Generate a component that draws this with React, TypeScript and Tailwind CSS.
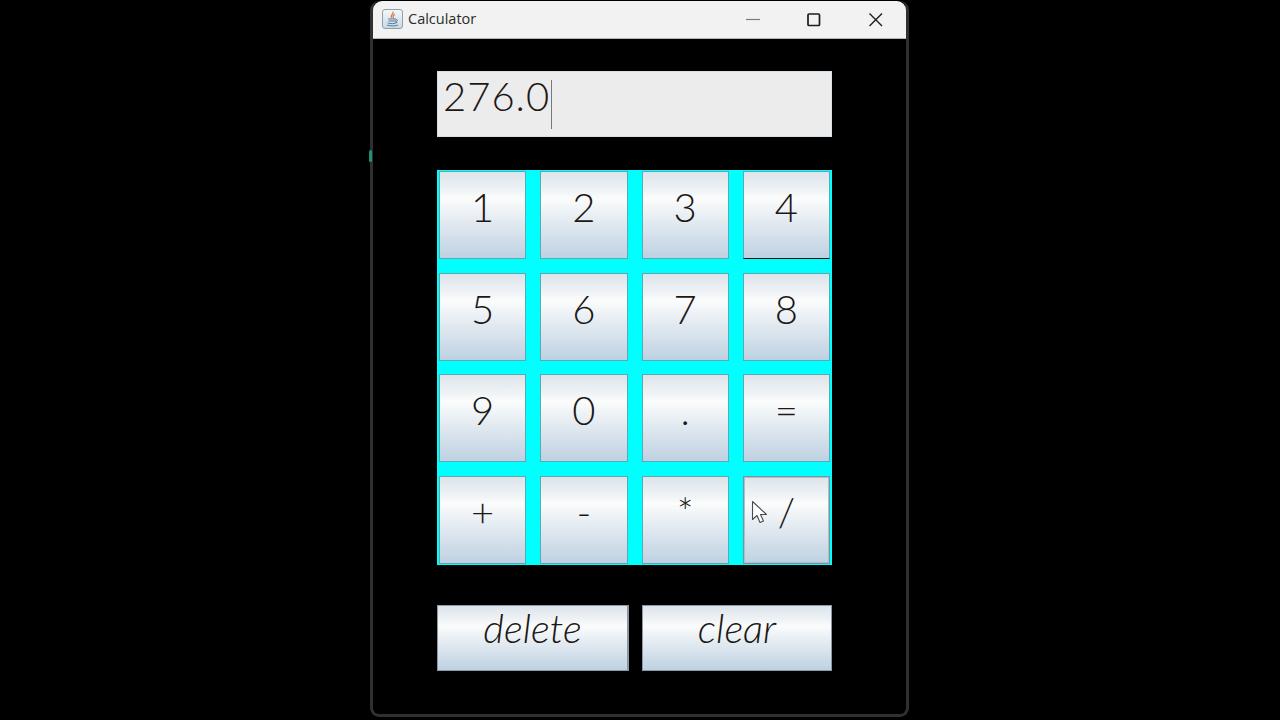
const keys = ['1', '2', '3', '4', '5', '6', '7', '8', '9', '0', '.', '=', '+', '-', '*', '/'];

const handFont = "font-['Lato',sans-serif] font-light text-[#1c1816]";
const btnFill = 'bg-[linear-gradient(180deg,#dce4ea_0%,#eef2f5_20%,#fbfcfc_31%,#e8eef3_52%,#bed1e2_100%)]';

function JavaIcon() {
  return (
    <span className="flex w-[21px] h-[20px] items-center justify-center rounded-[3px] border border-[#8fa0ad] bg-[linear-gradient(180deg,#f4f7f9,#c9d8e3)]">
      <svg width="15" height="16" viewBox="0 0 15 16" fill="none">
        <path d="M8 1c1 2-3 3-1.500 5.500M9.500 3.500c-1.500 1-2 2-1 3.500" stroke="#d9773a" strokeWidth="1.200" strokeLinecap="round" />
        <path d="M3.500 8h7M4 10h6.500M3 12c2 1 7 1 9-.5M11 8.500c2-.5 2 2-.5 2.500M2.500 14.200c3 1 7.500 1 10 0" stroke="#4f7ea3" strokeWidth="1" strokeLinecap="round" />
      </svg>
    </span>
  );
}

function TitleBar() {
  return (
    <div className="flex h-[38px] items-center bg-[#f2f2f2] border-b border-[#b5b5b5] rounded-t-[9px] pl-[9px] pb-[2px]">
      <JavaIcon />
      <span className="ml-[5px] font-['Open_Sans',sans-serif] text-[14.500px] text-[#2a2a2a]">Calculator</span>
      <div className="ml-auto flex items-center">
        <svg width="62" height="36" viewBox="0 0 62 36" fill="none">
          <path d="M26 18.500h14" stroke="#7d7d7d" strokeWidth="1.200" />
        </svg>
        <svg width="62" height="36" viewBox="0 0 62 36" fill="none">
          <rect x="26" y="13" width="11.500" height="11.500" rx="1" stroke="#1c1c1c" strokeWidth="1.700" />
        </svg>
        <svg width="62" height="36" viewBox="0 0 62 36" fill="none">
          <path d="M25.500 12.500l12.500 12.500M38 12.500l-12.500 12.500" stroke="#1c1c1c" strokeWidth="1.400" />
        </svg>
      </div>
    </div>
  );
}

function Key({ label, hovered, edge }: { label: string; hovered?: boolean; edge?: boolean }) {
  return (
    <button className={`relative flex h-[88px] justify-center border border-[#5aaab2] ${btnFill} ${hovered ? 'border-[#6f9aa3] shadow-[inset_0_0_0_1px_#b3bdc5]' : ''} ${edge ? 'border-b-[#111]' : ''}`}>
      <span className={`${handFont} mt-[11px] text-[40px] leading-[48px]`}>{label}</span>
      {hovered && (
        <svg className="absolute left-[7px] top-[23px]" width="18" height="26" viewBox="0 0 18 26" fill="none">
          <path d="M1.500 1.500v18l4.500-4 3 7 3.500-1.500-3-6.500h6z" fill="#fff" stroke="#4a4a4a" strokeWidth="1.100" strokeLinejoin="round" />
        </svg>
      )}
    </button>
  );
}

export default function App() {
  return (
    <div className="relative h-[720px] w-[1280px] overflow-hidden bg-black pl-[370px] pt-[1px]">
      <span className="absolute left-[369px] top-[150px] h-[12px] w-[3px] rounded-full bg-[#1f8f78]" />
      <div className="h-[716px] w-[539px] rounded-[9px] border-x-[3px] border-b-[3px] border-x-[#303030] border-b-[#303030]">
        <TitleBar />
        <div className="pl-[64px] pt-[32px]">
          <div className="flex h-[66px] w-[395px] items-start border border-[#d5dfe8] bg-[#ececec] pl-[5px]">
            <span className={`${handFont} text-[40px] leading-[48px] tracking-[1px]`}>276.0</span>
            <span className="ml-[1px] mt-[8px] h-[49px] w-px bg-[#77797b]" />
          </div>
          <div className="mt-[33px] grid h-[395px] w-[395px] grid-cols-4 gap-x-[14px] gap-y-[13.670px] bg-[#00ffff] px-[2px] py-[1px]">
            {keys.map((k) => (
              <Key key={k} label={k} hovered={k === '/'} edge={k === '4'} />
            ))}
          </div>
          <div className="mt-[40px] flex w-[395px] gap-[13px]">
            <button className={`flex h-[66px] w-[192px] justify-center border border-[#8b98a6] border-r-2 ${btnFill}`}>
              <span className={`${handFont} italic text-[40px] leading-[44px]`}>delete</span>
            </button>
            <button className={`flex h-[66px] w-[190px] justify-center border border-[#8b98a6] ${btnFill}`}>
              <span className={`${handFont} italic text-[40px] leading-[44px]`}>clear</span>
            </button>
          </div>
        </div>
      </div>
    </div>
  );
}
